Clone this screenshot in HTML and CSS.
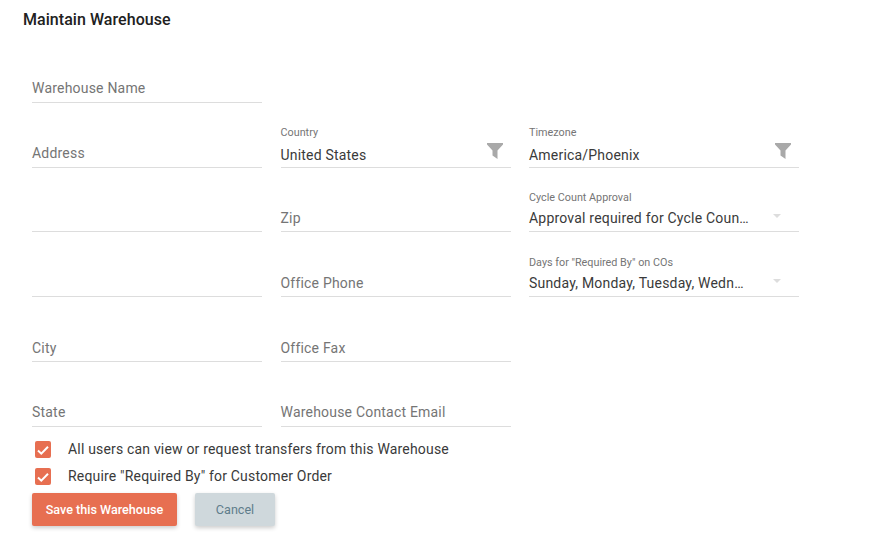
FILE: index.html
```html
<!DOCTYPE html>
<html>

<head>
  <title>Maintain Warehouse</title>
  <meta charset="utf-8">
  <link rel="stylesheet" href="styles.css">
</head>

<body>
  <h1>Maintain Warehouse</h1>
  <form class="warehouse-form">
    <div class="field-grid">
      <div class="field"><span class="placeholder">Warehouse Name</span></div>
      <div class="field"><span class="placeholder">Address</span></div>
      <div class="field"></div>
      <div class="field"></div>
      <div class="field field-tight"><span class="placeholder">City</span></div>
      <div class="field"><span class="placeholder">State</span></div>

      <div class="field-spacer"></div>
      <div class="field field-filter">
        <label>Country</label>
        <div class="value-row">
          <span class="value">United States</span>
          <svg class="filter-icon" viewBox="0 0 16 16"><path d="M0 0h16v1.5L10.5 7.5V16L5.5 12.5V7.5L0 1.5z" /></svg>
        </div>
      </div>
      <div class="field field-tight"><span class="placeholder">Zip</span></div>
      <div class="field field-tight"><span class="placeholder">Office Phone</span></div>
      <div class="field field-tight"><span class="placeholder">Office Fax</span></div>
      <div class="field"><span class="placeholder">Warehouse Contact Email</span></div>

      <div class="field-spacer"></div>
      <div class="field field-filter">
        <label>Timezone</label>
        <div class="value-row">
          <span class="value">America/Phoenix</span>
          <svg class="filter-icon" viewBox="0 0 16 16"><path d="M0 0h16v1.5L10.5 7.5V16L5.5 12.5V7.5L0 1.5z" /></svg>
        </div>
      </div>
      <div class="field field-tight">
        <label>Cycle Count Approval</label>
        <div class="value-row">
          <span class="value">Approval required for Cycle Coun…</span>
          <span class="caret"></span>
        </div>
      </div>
      <div class="field field-tight">
        <label>Days for "Required By" on COs</label>
        <div class="value-row">
          <span class="value">Sunday, Monday, Tuesday, Wedn…</span>
          <span class="caret"></span>
        </div>
      </div>
    </div>

    <div class="check-row">
      <span class="checkbox"><svg viewBox="0 0 16 16"><path d="M3 8.5l3.3 3.2L13 4.8" /></svg></span>
      <span>All users can view or request transfers from this Warehouse</span>
    </div>
    <div class="check-row">
      <span class="checkbox"><svg viewBox="0 0 16 16"><path d="M3 8.5l3.3 3.2L13 4.8" /></svg></span>
      <span>Require "Required By" for Customer Order</span>
    </div>

    <div class="button-group">
      <button type="button" class="btn-save">Save this Warehouse</button>
      <button type="button" class="btn-cancel">Cancel</button>
    </div>
  </form>
</body>

</html>
```

FILE: styles.css
```css
body {
  font-family: Roboto, "Liberation Sans", sans-serif;
  background-color: #fff;
  color: #333;
  margin: 0;
  height: 536px;
  overflow: hidden;
}

h1 {
  font-size: 16px;
  font-weight: 500;
  line-height: 20px;
  letter-spacing: 0.05px;
  margin: 0;
  padding: 10px 0 0 23px;
  color: #212121;
}

.warehouse-form {
  padding: 0 0 0 32px;
}

/* three columns filled top to bottom */
.field-grid {
  display: grid;
  grid-auto-flow: column;
  grid-template-rows: 73px 65px 64px 65px 65px 65px;
  grid-template-columns: 230px 230px 270px;
  column-gap: 18.5px;
}

.field {
  display: flex;
  flex-direction: column;
  justify-content: flex-end;
  border-bottom: 1px solid #ddd;
  padding-bottom: 4px;
  box-sizing: border-box;
}

.field-tight {
  padding-bottom: 3px;
}

.field-filter {
  padding-bottom: 2px;
}

.placeholder {
  font-size: 14px;
  line-height: 20px;
  letter-spacing: 0.2px;
  color: #757575;
}

label {
  font-size: 10.8px;
  line-height: 14px;
  color: #757575;
  margin-bottom: 3px;
}

.field-filter label {
  margin-bottom: 5px;
}

.value-row {
  display: flex;
  align-items: center;
  justify-content: space-between;
  height: 20px;
}

.value {
  font-size: 14px;
  line-height: 20px;
  letter-spacing: 0.2px;
  color: #3a3a3a;
  white-space: nowrap;
}

.filter-icon {
  width: 16px;
  height: 16px;
  fill: #a9a9a9;
  margin: -8px 8px 0 0;
}

.caret {
  width: 0;
  height: 0;
  border-left: 4px solid transparent;
  border-right: 4px solid transparent;
  border-top: 4px solid #ddd;
  margin: -4px 18px 0 0;
}

.check-row {
  display: flex;
  align-items: center;
  gap: 17px;
  height: 27px;
  padding-left: 3px;
  font-size: 14px;
  letter-spacing: 0.18px;
  color: #3a3a3a;
}

.field-grid + .check-row {
  margin-top: 8px;
}

.checkbox {
  width: 16px;
  height: 17px;
  background-color: #e76f51;
  border-radius: 2px;
  display: flex;
  align-items: center;
  margin-top: 2px;
}

.checkbox svg {
  width: 16px;
  height: 16px;
  fill: none;
  stroke: #fff;
  stroke-width: 2;
}

.button-group {
  display: flex;
  gap: 18px;
  margin-top: 4px;
}

button {
  height: 33px;
  border: none;
  border-radius: 2px;
  font-family: inherit;
  font-size: 12.6px;
  font-weight: 500;
  box-shadow: 0 2px 4px rgba(0, 0, 0, 0.2);
  cursor: pointer;
}

.btn-save {
  width: 145px;
  background-color: #e76f51;
  color: #fff;
}

.btn-cancel {
  width: 80px;
  background-color: #cfd8dc;
  color: #607d8b;
  font-weight: 400;
}
```
